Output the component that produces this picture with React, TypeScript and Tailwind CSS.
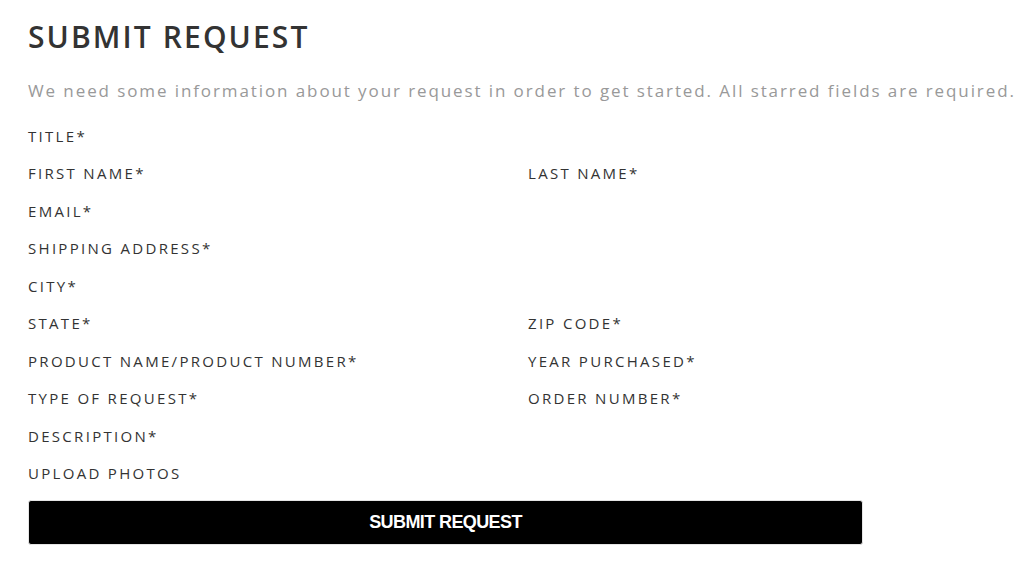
import React from "react";

const rows: [string, string | null][] = [
  ["TITLE*", null],
  ["FIRST NAME*", "LAST NAME*"],
  ["EMAIL*", null],
  ["SHIPPING ADDRESS*", null],
  ["CITY*", null],
  ["STATE*", "ZIP CODE*"],
  ["PRODUCT NAME/PRODUCT NUMBER*", "YEAR PURCHASED*"],
  ["TYPE OF REQUEST*", "ORDER NUMBER*"],
  ["DESCRIPTION*", null],
  ["UPLOAD PHOTOS", null],
];

export default function App() {
  return (
    <div className="w-[1031px] h-[573px] bg-white overflow-hidden pl-[28px] pt-[19px]" style={{ fontFamily: '"Open Sans", sans-serif' }}>
      <h1 className="text-[30px] leading-[36px] text-[#333333] tracking-[2.1px] font-semibold">SUBMIT REQUEST</h1>
      <p className="mt-[24px] text-[17px] leading-[24px] text-[#999999] tracking-[1.9px] whitespace-nowrap">
        We need some information about your request in order to get started. All starred fields are required.
      </p>
      <div className="mt-[14px] w-[1000px]">
        {rows.map(([a, b], i) => (
          <div key={i} className="grid grid-cols-2 h-[37.5px] items-center text-[15px] text-[#333333] tracking-[2.3px]">
            <span>{a}</span>
            <span>{b ?? ""}</span>
          </div>
        ))}
      </div>
      <button className="mt-[8px] w-[835px] h-[45px] bg-black rounded-[3px] border border-[#e5e5e5] text-white text-[18px] font-bold tracking-[-0.6px]" style={{ fontFamily: '"Liberation Sans", Arial, sans-serif', textShadow: "0 1px 1px rgba(0,0,0,0.6)" }}>
        SUBMIT REQUEST
      </button>
    </div>
  );
}
